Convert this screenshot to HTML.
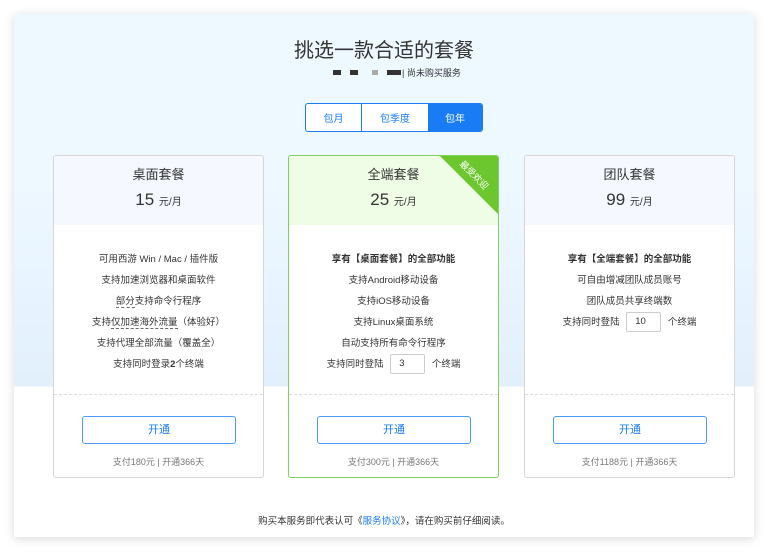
<!DOCTYPE html>
<html><head><meta charset="utf-8"><style>
*{margin:0;padding:0;box-sizing:border-box}
body{width:768px;height:552px;background:#fff;font-family:"Liberation Sans","Noto Sans CJK SC",sans-serif;position:relative;overflow:hidden;color:#333}
.wrap{position:absolute;left:14px;top:14px;width:740px;height:523px;background:linear-gradient(#eef8ff 0,#eef8ff 160px,#e6f3ff 300px,#e2f0fc 372px,#fff 373px);box-shadow:0 2px 10px rgba(0,0,0,.15);border-radius:2px}
h1{position:absolute;top:34px;width:100%;text-align:center;font-size:20px;font-weight:normal;color:#333;left:0}
.sub{position:absolute;top:66px;left:333px;font-size:9px;color:#333;display:flex;align-items:center}
.sub i{display:inline-block;height:5px;background:#333;margin-right:9px}
.tabs{position:absolute;left:305px;top:103px;width:178px;height:29px;border:1px solid #1a7cf5;border-radius:3px;display:flex;overflow:hidden;background:#fff}
.tabs div{font-size:10px;color:#1a7cf5;display:flex;align-items:center;justify-content:center}
.card{position:absolute;top:155px;width:211px;height:323px;border:1px solid #d6d6d6;border-radius:3px;background:#fff;overflow:hidden}
.hd{height:69px;background:#f5f9ff;text-align:center}
.hd .t{padding-top:8px;font-size:13px;color:#333}
.hd .p{margin-top:7px;font-size:17px}.hd .p span{font-size:10px}
.f{text-align:center;font-size:9.5px;line-height:21px;margin-top:24px;color:#333}
.f .u{border-bottom:1px dashed #666}
.inp{display:inline-block;width:35px;height:20px;border:1px solid #ccc;border-radius:2px;vertical-align:middle;text-align:left;padding-left:8px;line-height:18px;margin:0 4px}
.line{position:absolute;top:238px;left:0;right:0;border-top:1px dashed #ddd}
.btn{position:absolute;top:260px;left:28px;width:154px;height:28px;border:1px solid #4c9bfa;border-radius:3px;color:#1a7cf5;font-size:11px;text-align:center;line-height:26px}
.pay{position:absolute;top:299px;width:100%;text-align:center;font-size:9px;color:#777}
.foot{position:absolute;top:513px;width:100%;text-align:center;font-size:9.5px;color:#333}
.foot a{color:#1a7cf5}
</style></head><body>
<div class="wrap"></div>
<h1>挑选一款合适的套餐</h1>
<div class="sub"><i style="width:8px"></i><i style="width:8px;margin-right:14px"></i><i style="width:6px;background:#aaa"></i><i style="width:14px;margin-right:1px"></i>| 尚未购买服务</div>
<div class="tabs"><div style="width:56px;border-right:1px solid #1a7cf5">包月</div><div style="width:66px">包季度</div><div style="flex:1;background:#1a7cf5;color:#fff">包年</div></div>

<div class="card" style="left:53px"><div class="hd"><div class="t">桌面套餐</div><div class="p">15 <span>元/月</span></div></div>
<div class="f">可用西游 Win / Mac / 插件版<br>支持加速浏览器和桌面软件<br><span class="u">部分</span>支持命令行程序<br>支持<span class="u">仅加速海外流量</span>（体验好）<br>支持代理全部流量（覆盖全）<br>支持同时登录<b>2</b>个终端</div>
<div class="line"></div><div class="btn">开通</div><div class="pay">支付180元 | 开通366天</div></div>

<div class="card" style="left:288px;border-color:#7ed35a"><div class="hd" style="background:#f0fde6"><div class="t">全端套餐</div><div class="p">25 <span>元/月</span></div></div>
<div style="position:absolute;right:0;top:0;width:0;height:0;border-top:58px solid #6cc72f;border-left:58px solid transparent"></div>
<div style="position:absolute;right:-6px;top:12px;width:60px;height:14px;color:#fff;font-size:9px;text-align:center;line-height:14px;transform:rotate(45deg)">最受欢迎</div>
<div class="f"><b>享有【桌面套餐】的全部功能</b><br>支持Android移动设备<br>支持iOS移动设备<br>支持Linux桌面系统<br>自动支持所有命令行程序<br>支持同时登陆 <span class="inp">3</span> 个终端</div>
<div class="line"></div><div class="btn">开通</div><div class="pay">支付300元 | 开通366天</div></div>

<div class="card" style="left:524px"><div class="hd"><div class="t">团队套餐</div><div class="p">99 <span>元/月</span></div></div>
<div class="f"><b>享有【全端套餐】的全部功能</b><br>可自由增减团队成员账号<br>团队成员共享终端数<br>支持同时登陆 <span class="inp">10</span> 个终端</div>
<div class="line"></div><div class="btn">开通</div><div class="pay">支付1188元 | 开通366天</div></div>

<div class="foot">购买本服务即代表认可《<a>服务协议</a>》，请在购买前仔细阅读。</div>
</body></html>
